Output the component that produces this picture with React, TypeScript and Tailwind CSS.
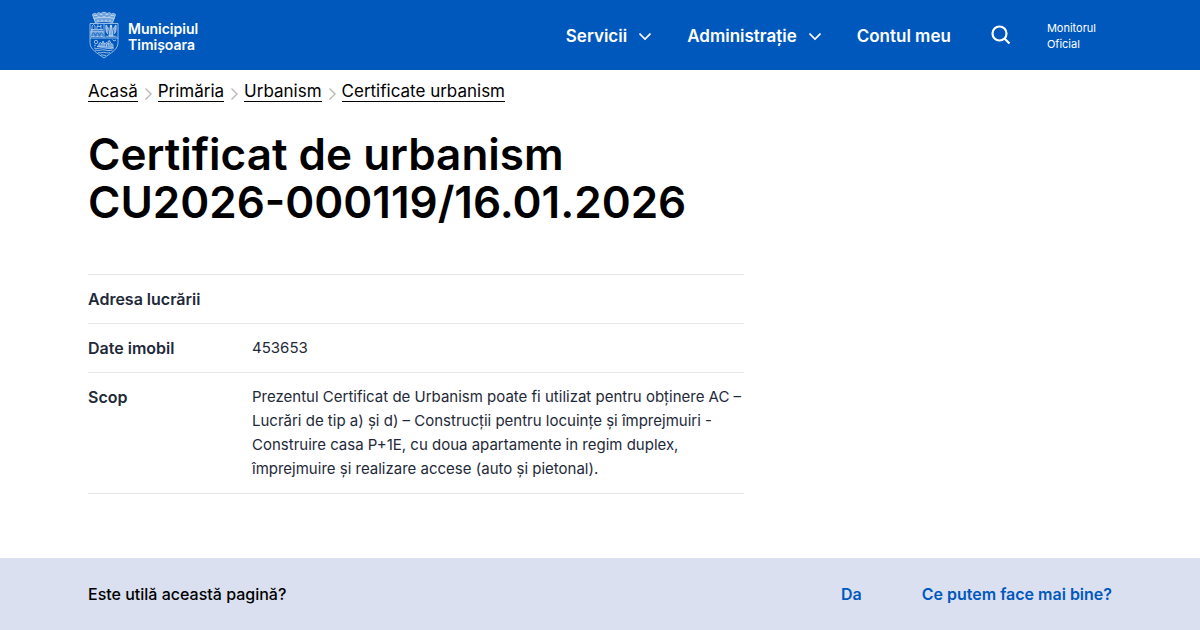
import React from "react";

const breadcrumbs = ["Acasă", "Primăria", "Urbanism", "Certificate urbanism"];

const details = [
  { label: "Adresa lucrării", value: "" },
  { label: "Date imobil", value: "453653" },
  {
    label: "Scop",
    value:
      "Prezentul Certificat de Urbanism poate fi utilizat pentru obținere AC – Lucrări de tip a) și d) – Construcții pentru locuințe și împrejmuiri - Construire casa P+1E, cu doua apartamente in regim duplex, împrejmuire și realizare accese (auto și pietonal).",
  },
];

const Crest = () => (
  <svg
    className="h-12 w-8"
    viewBox="0 0 32 48"
    fill="none"
    stroke="#d6e5f7"
    strokeWidth="0.7"
    aria-hidden="true"
  >
    {/* mural crown */}
    <path
      d="M4.5 3.5l2-1.2 2 .8 2-1.5 2 .8 3.5-1.2 3.5 1.2 2-.8 2 1.500 2-.8 2 1.200-1.500 4.500H6z"
      fill="#6fa1da"
    />
    <path d="M6 7.500c6-1.600 14-1.600 20 0l-1.300 4c-5-1.300-12.400-1.300-17.400 0z" fill="#6fa1da" />
    <path d="M6 4.500h3.500M12 3.500h2.500M17.500 3.500H20M22.500 4.500H26M9.500 6h2M15 5.500h2M20.500 6h2M9 9.800h2M13 9.200h2M17 9.200h2M21 9.800h2" />
    {/* shield */}
    <path d="M2 12.500h28v19c0 7-6.500 10-14 15.500C8.500 41.500 2 38.500 2 31.500z" />
    <path d="M16 12.500V27M2 27h28" />
    {/* bridge */}
    <path d="M3 20h12v5.500H3z" fill="#6fa1da" />
    <path d="M4 25.500V23q1.500-2 3 0v2.500M8 25.500V23q1.500-2 3 0v2.500M12 25.500V23q1.500-2 3 0v2.500" stroke="#0058bc" />
    <path d="M3 18.500h12M4 20v-5l1.500-1.500L7 15v3M9 18v-2.500h4V18M12 14l2 1M9 14h1.500" />
    {/* winged figure */}
    <path
      d="M22.200 16h1.600l1.200 9h-4zM21 18c-1.500-1-2-4-3-4-.5 4 0 8 2 9M25 18c1.500-1 2-4 3-4 .5 4 0 8-2 9"
      fill="#7fabdf"
    />
    <circle cx="23" cy="15" r="0.900" fill="#d6e5f7" />
    <path d="M17.500 25.300h11" />
    {/* fortress over the water */}
    <path d="M9 35.500l2-1v-2l1.500-1 1.500 1.500 1-3 1.500 3 2-1.500 1.500 2v-3l1.500-1 1.500 3 2 1v3z" fill="#3d7fcd" />
    <path d="M12 34v2M14 33v3M16 32v4M18.500 33v3M21 32v4M23 33v3M6 37c4 1.500 7-1 11 0s6 .5 9 0M7 39c4 1.500 7-1 10 0s5 .5 7.500 0M10 41.500c3 1.200 5-.8 7 0s3 .5 5 0" />
    <circle cx="8" cy="31" r="1.700" />
    <path d="M24.500 28.500l1.500 1.500 2-1M13 43.800l5 .7M6 35l2-1" />
  </svg>
);

const ChevronDown = () => (
  <svg className="h-3 w-3" viewBox="0 0 12 12" fill="none" stroke="currentColor" strokeWidth="1.600" aria-hidden="true">
    <path d="M0.500 3.500L6 9l5.500-5.500" />
  </svg>
);

const Header = () => (
  <header className="bg-[#0058bc] text-white">
    <div className="mx-auto flex h-[70px] max-w-5xl items-center">
      <a href="#" className="flex items-center gap-2 text-sm leading-4 font-semibold">
        <Crest />
        <span className="pt-1">
          Municipiul
          <br />
          Timișoara
        </span>
      </a>
      <nav className="ml-auto flex items-center pt-0.5 text-[17px] leading-6 font-semibold">
        <button type="button" className="flex items-center gap-3">
          Servicii
          <ChevronDown />
        </button>
        <button type="button" className="ml-9 flex items-center gap-3">
          Administrație
          <ChevronDown />
        </button>
        <a href="#" className="ml-9">
          Contul meu
        </a>
      </nav>
      <button type="button" className="ml-9 p-1" aria-label="Caută">
        <svg className="h-5 w-5" viewBox="0 0 20 20" fill="none" stroke="currentColor" strokeWidth="2.200" aria-hidden="true">
          <circle cx="8.500" cy="8.500" r="7" />
          <path d="M13.500 13.500l5 5" />
        </svg>
      </button>
      <a href="#" className="mr-4 ml-8 pt-0.5 text-[11px] leading-4">
        Monitorul
        <br />
        Oficial
      </a>
    </div>
  </header>
);

const Breadcrumbs = () => (
  <nav aria-label="Breadcrumb">
    <ol className="flex items-center text-[17px] leading-[19px] text-black">
      {breadcrumbs.map((item, index) => (
        <li key={item} className="flex items-center">
          {index > 0 && (
            <svg className="mx-1 mt-1 h-3 w-3" viewBox="0 0 12 12" fill="none" stroke="#b8b8b8" strokeWidth="1.400" aria-hidden="true">
              <path d="M3.500 0.500L9 6l-5.500 5.500" />
            </svg>
          )}
          <a href="#" className="border-b border-black">
            {item}
          </a>
        </li>
      ))}
    </ol>
  </nav>
);

const App = () => {
  return (
    <div className="bg-white font-['Inter',sans-serif]">
      <Header />
      <main className="mx-auto max-w-5xl pt-3 pb-16">
        <Breadcrumbs />
        <h1 className="mt-7 text-[44px] leading-12 font-semibold text-black">
          Certificat de urbanism
          <br />
          CU2026-000119/16.01.2026
        </h1>
        <dl className="mt-12 w-[656px] max-w-full divide-y divide-gray-200 border-y border-gray-200 text-base text-gray-800">
          {details.map((detail) => (
            <div key={detail.label} className="grid grid-cols-4 py-3">
              <dt className="font-semibold">{detail.label}</dt>
              <dd className="col-span-3 text-[15px] leading-6">{detail.value}</dd>
            </div>
          ))}
        </dl>
      </main>
      <footer className="bg-[#dae0f0]">
        <div className="mx-auto flex max-w-5xl items-center justify-between py-6 text-base">
          <p className="font-medium text-black">Este utilă această pagină?</p>
          <div className="flex gap-15 font-semibold text-[#0058bc]">
            <button type="button">Da</button>
            <button type="button">Ce putem face mai bine?</button>
          </div>
        </div>
      </footer>
    </div>
  );
};

export default App;
